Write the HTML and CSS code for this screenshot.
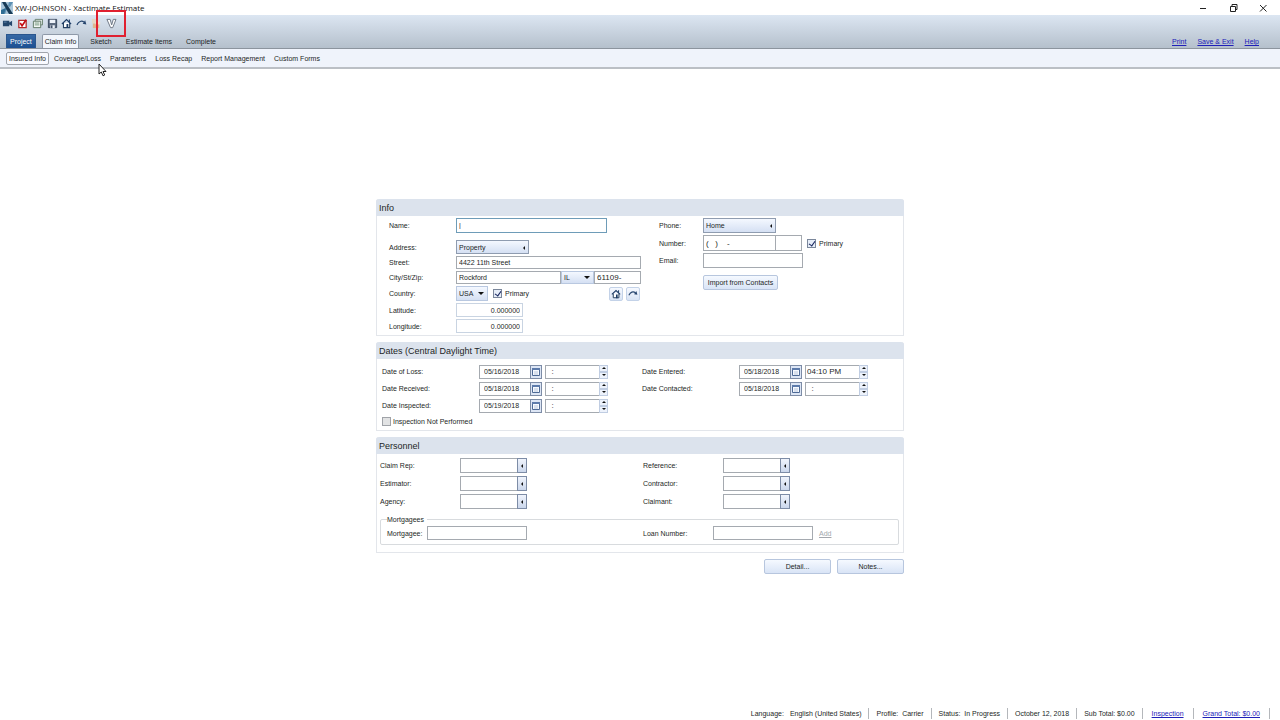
FILE: index.html
```html
<!DOCTYPE html>
<html lang="en">
<head>
<meta charset="utf-8">
<meta name="viewport" content="width=device-width, initial-scale=1">
<title>XW-JOHNSON - Xactimate Estimate</title>
<link rel="stylesheet" href="styles.css">
</head>
<body>
<svg class="symbols" aria-hidden="true">
  <symbol id="calendar" viewBox="0 0 10 10"><path fill="#f7faff" stroke="#4e6a96" d="M1.500 1.500h7v7h-7z"/><path fill="#5d7bab" d="M1 1h8v2H1z"/><path stroke="#9fb0cb" stroke-width=".7" d="M3 5h4M3 7h4"/></symbol>
  <symbol id="house" viewBox="0 0 12 12"><path fill="#fff" stroke="#26405f" stroke-width="1.200" d="M2.700 5.500v5h6.800v-5"/><path fill="none" stroke="#1d3c66" stroke-width="1.300" d="M1 6.500 6 1.800l5 4.700"/><path fill="#1d3c66" d="M6 6.500h2V11H6zM8.500 1.500h1.200v3H8.500z"/></symbol>
  <symbol id="arc" viewBox="0 0 12 12"><path fill="none" stroke="#27466f" stroke-width="1.300" d="M1 7.500C3 3.500 6 2.500 9 4.500"/><path fill="#27466f" d="M7.300 6.300 11.300 7 10 2.500z"/></symbol>
</svg>

<header class="titlebar">
  <svg class="app-icon" viewBox="0 0 12 12"><path fill="#a9c6da" d="M0 0h12v12H0z"/><path fill="#5d90b3" d="M8 0h4L9 5 7 4zM1 12l3-6 2 1-2 5z"/><path fill="#173a56" d="M1 0h3.500L12 12H8z"/><path fill="#2f6d94" d="M0 8l5-2-2 6H0z"/></svg>
  <h1 class="title">XW-JOHNSON - Xactimate Estimate</h1>
  <div class="window-buttons">
    <button aria-label="Minimize"><svg viewBox="0 0 10 10"><path d="M2 5.500h6"/></svg></button>
    <button aria-label="Restore"><svg viewBox="0 0 10 10"><path d="M2.500 3.500h5v5h-5zM4 3.500v-2h5v5H7.500"/></svg></button>
    <button aria-label="Close"><svg viewBox="0 0 10 10"><path d="m2 2 6.500 6.500M8.500 2 2 8.500"/></svg></button>
  </div>
</header>

<div class="ribbon">
  <div class="toolbar">
    <button aria-label="Video"><svg viewBox="0 0 12 12"><path fill="#24466c" d="M1 3h7v6H1zM8 5l3-2v6L8 7z"/><path fill="#5f86ad" d="M2 4h3v1H2z"/></svg></button>
    <button aria-label="Tasks"><svg viewBox="0 0 12 12"><path fill="#fff" stroke="#b52a2a" stroke-width="1.400" d="M2 2.500h8v8H2z"/><path fill="none" stroke="#c40d14" stroke-width="1.800" d="m3.500 5.500 2 3 4.500-6.500"/></svg></button>
    <button aria-label="Copy"><svg viewBox="0 0 12 12"><path fill="#dfe8e4" stroke="#67806f" d="M3.500 1.500h8v6h-8z"/><path fill="#f3f8f4" stroke="#5a7461" d="M1.500 3.500h8v7h-8z"/><path stroke="#6f927a" d="M3 5.500h5M3 7.500h5"/></svg></button>
    <button aria-label="Save"><svg viewBox="0 0 12 12"><path fill="#5d6b80" stroke="#36455b" d="M1.500 1.500h9v9h-9z"/><path fill="#eef3fa" d="M3 2h6v3.500H3zM3.500 8h5v3h-5z"/><path fill="#44536a" d="M4 8h2v3H4z"/></svg></button>
    <button class="address" aria-label="Address"><svg><use href="#house"/></svg></button>
    <button aria-label="Map"><svg><use href="#arc"/></svg></button>
    <button aria-label="Notes"><svg viewBox="0 0 12 12"><path fill="#e3d8c6" d="M1 1h6v5H1z"/><path fill="#e0b68e" d="M2 6h7v5H2z"/><path fill="#f0e3d0" d="M5 4h5v3H5z"/></svg></button>
    <button class="marked" aria-label="Valuation"><svg viewBox="0 0 12 12"><path fill="#fff" stroke="#68717e" d="M1 1.500h3.500l1.700 6 1.700-6h3L7.300 10.500H5z"/></svg></button>
  </div>
  <div class="tab-row">
    <nav class="tabs" aria-label="Sections">
      <button class="tab project">Project</button>
      <button class="tab current">Claim Info</button>
      <button class="tab">Sketch</button>
      <button class="tab">Estimate Items</button>
      <button class="tab">Complete</button>
    </nav>
    <div class="links"><a href="#print">Print</a><a href="#save">Save &amp; Exit</a><a href="#help">Help</a></div>
  </div>
</div>
<nav class="subnav" aria-label="Claim info pages">
  <button class="selected">Insured Info</button>
  <button>Coverage/Loss</button>
  <button>Parameters</button>
  <button>Loss Recap</button>
  <button>Report Management</button>
  <button>Custom Forms</button>
</nav>
<svg class="pointer" viewBox="0 0 9 14" aria-hidden="true"><path fill="#fff" stroke="#222" d="M1 1v10l2.300-2L5 12.800l1.700-.8L5 8.500h3z"/></svg>

<main class="page">
  <form class="form">
    <section class="panel">
      <h2>Info</h2>
      <div class="info">
        <div class="stack">
          <div class="line"><label for="name">Name:</label><input id="name" class="name" type="text" value="|"></div>
          <div class="line spaced short"><label for="address">Address:</label><span class="pick side"><select id="address"><option>Property</option></select></span></div>
          <div class="line thin"><label for="street">Street:</label><input id="street" class="street" type="text" value="4422 11th Street"></div>
          <div class="line thin"><label for="city">City/St/Zip:</label><input id="city" class="city" type="text" value="Rockford"><span class="pick down state"><select aria-label="State"><option>IL</option></select></span><input class="zip big" type="text" aria-label="Zip" value="61109-"></div>
          <div class="line"><label for="country">Country:</label><span class="pick down country"><select id="country"><option>USA</option></select></span>
            <label class="check"><input type="checkbox" checked>Primary</label>
            <span class="icon-pair"><button type="button" aria-label="Find address"><svg><use href="#house"/></svg></button><button type="button" aria-label="Show map"><svg><use href="#arc"/></svg></button></span></div>
          <div class="line short"><label for="lat">Latitude:</label><input id="lat" class="coord" type="text" value="0.000000"></div>
          <div class="line short"><label for="lon">Longitude:</label><input id="lon" class="coord" type="text" value="0.000000"></div>
        </div>
        <div class="stack contact">
          <div class="line"><label for="phone">Phone:</label><span class="pick side"><select id="phone"><option>Home</option></select></span></div>
          <div class="line tall"><label for="number">Number:</label><input id="number" class="number big" type="text" value="(   )    -"><input class="ext" type="text" aria-label="Extension"><label class="check"><input type="checkbox" checked>Primary</label></div>
          <div class="line"><label for="email">Email:</label><input id="email" class="email" type="text"></div>
          <div class="line spaced"><button type="button" class="btn import">Import from Contacts</button></div>
        </div>
      </div>
    </section>

    <section class="panel">
      <h2>Dates (Central Daylight Time)</h2>
      <div class="dates">
        <div class="stack">
          <div class="line"><label for="d1">Date of Loss:</label><span class="date"><input id="d1" type="text" value="05/16/2018"><button type="button" aria-label="Pick date"><svg><use href="#calendar"/></svg></button></span><span class="time"><input type="text" aria-label="Time of loss" value="  :"><span class="spin"><button type="button" aria-label="Later"></button><button type="button" aria-label="Earlier"></button></span></span></div>
          <div class="line"><label for="d2">Date Received:</label><span class="date"><input id="d2" type="text" value="05/18/2018"><button type="button" aria-label="Pick date"><svg><use href="#calendar"/></svg></button></span><span class="time"><input type="text" aria-label="Time received" value="  :"><span class="spin"><button type="button" aria-label="Later"></button><button type="button" aria-label="Earlier"></button></span></span></div>
          <div class="line"><label for="d3">Date Inspected:</label><span class="date"><input id="d3" type="text" value="05/19/2018"><button type="button" aria-label="Pick date"><svg><use href="#calendar"/></svg></button></span><span class="time"><input type="text" aria-label="Time inspected" value="  :"><span class="spin"><button type="button" aria-label="Later"></button><button type="button" aria-label="Earlier"></button></span></span></div>
          <div class="line thin"><label class="check idle"><input type="checkbox">Inspection Not Performed</label></div>
        </div>
        <div class="stack">
          <div class="line"><label for="d4">Date Entered:</label><span class="date"><input id="d4" type="text" value="05/18/2018"><button type="button" aria-label="Pick date"><svg><use href="#calendar"/></svg></button></span><span class="time"><input type="text" aria-label="Time entered" value="04:10 PM"><span class="spin"><button type="button" aria-label="Later"></button><button type="button" aria-label="Earlier"></button></span></span></div>
          <div class="line"><label for="d5">Date Contacted:</label><span class="date"><input id="d5" type="text" value="05/18/2018"><button type="button" aria-label="Pick date"><svg><use href="#calendar"/></svg></button></span><span class="time"><input type="text" aria-label="Time contacted" value="  :"><span class="spin"><button type="button" aria-label="Later"></button><button type="button" aria-label="Earlier"></button></span></span></div>
        </div>
      </div>
    </section>

    <section class="panel">
      <h2>Personnel</h2>
      <div class="people">
        <div class="stack">
          <div class="line"><label for="rep">Claim Rep:</label><span class="combo"><input id="rep" type="text"><button type="button" aria-label="Choose claim rep"></button></span></div>
          <div class="line"><label for="est">Estimator:</label><span class="combo"><input id="est" type="text"><button type="button" aria-label="Choose estimator"></button></span></div>
          <div class="line"><label for="agy">Agency:</label><span class="combo"><input id="agy" type="text"><button type="button" aria-label="Choose agency"></button></span></div>
        </div>
        <div class="stack">
          <div class="line"><label for="ref">Reference:</label><span class="combo"><input id="ref" type="text"><button type="button" aria-label="Choose reference"></button></span></div>
          <div class="line"><label for="con">Contractor:</label><span class="combo"><input id="con" type="text"><button type="button" aria-label="Choose contractor"></button></span></div>
          <div class="line"><label for="clm">Claimant:</label><span class="combo"><input id="clm" type="text"><button type="button" aria-label="Choose claimant"></button></span></div>
        </div>
      </div>
      <fieldset class="mortgage">
        <legend>Mortgagees</legend>
        <div class="line short"><label for="mort">Mortgagee:</label><input id="mort" type="text"></div>
        <div class="line short loan"><label for="loan">Loan Number:</label><input id="loan" type="text"><a class="add" href="#add">Add</a></div>
      </fieldset>
    </section>

    <div class="actions"><button type="button" class="btn">Detail...</button><button type="button" class="btn">Notes...</button></div>
  </form>
</main>

<footer class="status">
  <span><b>Language:</b>English (United States)</span>
  <span>Profile:&nbsp; Carrier</span>
  <span>Status:&nbsp; In Progress</span>
  <span>October 12, 2018</span>
  <span>Sub Total: $0.00</span>
  <span class="linked"><a href="#inspection">Inspection</a></span>
  <span class="linked"><a href="#total">Grand Total: $0.00</a></span>
</footer>
</body>
</html>
```
FILE: styles.css
```css
*, *::before, *::after { box-sizing: border-box; }
body {
  margin: 0;
  min-height: 100vh;
  display: flex;
  flex-direction: column;
  background: #fff;
  color: #1c1f26;
  font: 7px/9px "Liberation Sans", Arial, sans-serif;
}
button, input, select { font: inherit; color: inherit; margin: 0; }
button { padding: 0; border: 0; background: none; white-space: nowrap; }
input, select { border-radius: 0; outline: 0; }
a { color: #2020b8; text-decoration: underline; }
svg { display: block; }
.symbols { position: absolute; width: 0; height: 0; }

.titlebar { display: flex; align-items: center; height: 15px; padding-left: 1px; gap: 2px; }
.app-icon { width: 12px; height: 12px; }
.title { margin: 0; font: 8px/15px "Open Sans", sans-serif; color: #111; }
.window-buttons { display: flex; gap: 20px; margin-left: auto; padding-right: 12px; }
.window-buttons svg { width: 10px; height: 10px; fill: none; stroke: #222; stroke-width: 1; }

.ribbon {
  height: 34px;
  display: flex;
  flex-direction: column;
  justify-content: space-between;
  background: linear-gradient(#dce6f2, #b5c0cc);
  border-bottom: 1px solid #8c949e;
}
.toolbar { display: flex; align-items: center; gap: 4px; height: 17px; padding-left: 2px; }
.toolbar button { position: relative; width: 11px; height: 11px; }
.toolbar .address { margin-left: -1px; }
.toolbar svg { width: 11px; height: 11px; }
.toolbar .marked::after {
  content: "";
  position: absolute;
  left: -10px;
  top: -8px;
  width: 30px;
  height: 27px;
  border: 2px solid #e02030;
}
.tab-row { display: flex; justify-content: space-between; align-items: flex-end; }
.tabs { display: flex; gap: 8px; padding-left: 6px; }
.tab { height: 14px; padding: 0 3px; }
.tab.project { padding: 0 3px 1px; color: #fff; background: linear-gradient(#3568a5, #1c4f91); border: 1px solid #2a568e; border-bottom: 0; margin-right: -2px; }
.tab.current { background: #f2f6fc; border: 1px solid #8e99a8; border-bottom: 0; border-radius: 2px 2px 0 0; padding: 0 2px 1px; }
.links { display: flex; gap: 11px; padding: 0 21px 2px 0; }

.subnav { display: flex; align-items: center; gap: 9px; height: 20px; padding: 0 6px; background: #eff3fb; border-bottom: 2px solid #bbbfc5; }
.subnav .selected { height: 13px; padding: 0 2px; margin-right: -4px; border: 1px solid #a0a5ad; border-radius: 2px; background: #f9faff; }
.pointer { position: absolute; left: 98px; top: 63px; width: 9px; height: 14px; }

.page { flex: 1; display: flex; align-items: center; justify-content: center; padding: 0 8px 3px; }
.form { width: 100%; max-width: 528px; display: flex; flex-direction: column; gap: 6px; }
.panel { border: 1px solid #e3e6eb; border-top: 0; border-radius: 3px 3px 0 0; padding-bottom: 2px; }
.panel h2 { margin: 0 -1px; padding: 1px 3px 0; font: 9px/16px "Liberation Sans", Arial, sans-serif; background: #dce3ed; border-radius: 3px 3px 0 0; }
.stack { display: flex; flex-direction: column; gap: 2px; }
.line { display: flex; align-items: center; height: 15px; }
.line.tall { height: 16px; }
.line.short { height: 14px; }
.line.thin { height: 13px; }
.line > label:first-child { flex: none; }
.line input[type="text"] { min-width: 0; height: 100%; padding: 0 2px; border: 1px solid #a5aab0; background: #fff; }
.line input.big, .line .time input { font-size: 8px; }

.info { display: grid; grid-template-columns: 270px 1fr; padding: 2px 0 0 12px; }
.info .line > label:first-child:not(.check) { width: 67px; }
.info .spaced { margin-top: 5px; }
.info .contact .line > label:first-child:not(.check) { width: 44px; }
.line input.name[type="text"] { width: 151px; border-color: #6e9cb8; }
.street { width: 185px; }
.city { width: 105px; }
.zip { width: 47px; }
.line input.coord[type="text"] { width: 67px; text-align: right; border-color: #c9d4e2; }
.number { width: 73px; }
.ext { width: 27px; margin-left: -1px; }
.email { width: 100px; }
.import { width: 75px; margin-left: 44px; }

.pick { position: relative; display: flex; height: 100%; }
.pick select { appearance: none; width: 100%; height: 100%; padding: 0 2px; background: linear-gradient(#f4f8ff, #d5e0f3); border: 1px solid #b9c8e0; }
.pick::after { content: ""; position: absolute; border: solid transparent; pointer-events: none; }
.pick.side { width: 73px; }
.pick.side select { border-color: #8f9cb0; }
.pick.side::after { right: 4px; top: 6px; border-width: 2px 2px 2px 0; border-right-color: #111; }
.pick.down::after { right: 4px; top: 6px; border-width: 3px 3px 0; border-top-color: #111; }
.pick.state { width: 33px; }
.pick.state::after { top: 5px; }
.pick.country { width: 32px; }

.check { display: flex; align-items: center; gap: 3px; margin-left: 5px; }
.check input { appearance: none; position: relative; width: 9px; height: 9px; border: 1px solid #7b879b; background: #f1f5fc; }
.check input:checked { background: #e6edf8; }
.check input:checked::after { content: ""; position: absolute; left: 2px; top: 0; width: 4px; height: 6px; border: solid #14225c; border-width: 0 1px 1px 0; transform: rotate(35deg); }
.check.idle { margin-left: 0; gap: 2px; }
.check.idle input { border-color: #a0a3a8; background: #e2e3e4; }
.icon-pair { display: flex; gap: 3px; margin-left: auto; margin-right: 19px; }
.icon-pair button { width: 14px; height: 14px; display: grid; place-items: center; border: 1px solid #c3d2e8; border-radius: 2px; background: linear-gradient(#f6f9ff, #d9e4f5); }
.icon-pair svg { width: 10px; height: 10px; }

.dates { display: grid; grid-template-columns: 260px 1fr; padding: 5px 0 0 5px; }
.dates .line > label:first-child:not(.check) { width: 97px; }
.date { display: flex; width: 63px; height: 14px; margin-right: 3px; }
.line .date input { width: 52px; padding: 0 4px; border-right: 0; }
.date button { width: 12px; display: grid; place-items: center; border: 1px solid #7d8ca6; background: #dde6f5; }
.date svg { width: 10px; height: 10px; }
.time { display: flex; width: 63px; height: 14px; }
.line .time input { width: 54px; padding: 0 1px; border-right: 0; white-space: pre; }
.spin { display: flex; flex-direction: column; width: 9px; }
.spin button { flex: 1; display: grid; place-items: center; border: 1px solid #c0cde2; background: #edf2fb; }
.spin button::before { content: ""; border: solid transparent; border-width: 0 2px 2px; border-bottom-color: #111; }
.spin button:last-child::before { border-width: 2px 2px 0; border-top-color: #111; }

.people { display: grid; grid-template-columns: 263px 1fr; padding: 4px 0 0 3px; }
.people .stack { gap: 3px; }
.people .line > label:first-child { width: 80px; }
.combo { display: flex; width: 67px; height: 100%; }
.line .combo input { width: 58px; border-right: 0; }
.combo button { width: 10px; display: grid; place-items: center; border: 1px solid #7d8ca6; background: linear-gradient(#f0f4fc, #cbd7ec); }
.combo button::before { content: ""; border: solid transparent; border-width: 2px 2px 2px 0; border-right-color: #111; }
.mortgage { display: grid; grid-template-columns: 256px 1fr; margin: 6px 4px 5px 3px; padding: 2px 0 4px 6px; border: 1px solid #d8dbde; border-radius: 2px; }
.mortgage legend { padding: 0 3px 0 0; }
.mortgage .line > label { width: 40px; }
.mortgage .loan > label { width: 70px; }
.mortgage input { width: 100px; }
.add { margin-left: 6px; color: #a3a7ad; }

.btn { height: 15px; border: 1px solid #b7c6de; border-radius: 2px; background: linear-gradient(#f5f9ff, #d9e4f6); }
.actions { display: flex; justify-content: flex-end; gap: 6px; }
.actions .btn { width: 67px; }

.status { display: flex; justify-content: flex-end; align-items: center; height: 13px; padding-right: 10px; }
.status span { padding: 0 7px; border-right: 1px solid #b4b7bb; line-height: 11px; }
.status .linked { padding: 0 9px; }
.status b { font-weight: 400; margin-right: 6px; }
```
